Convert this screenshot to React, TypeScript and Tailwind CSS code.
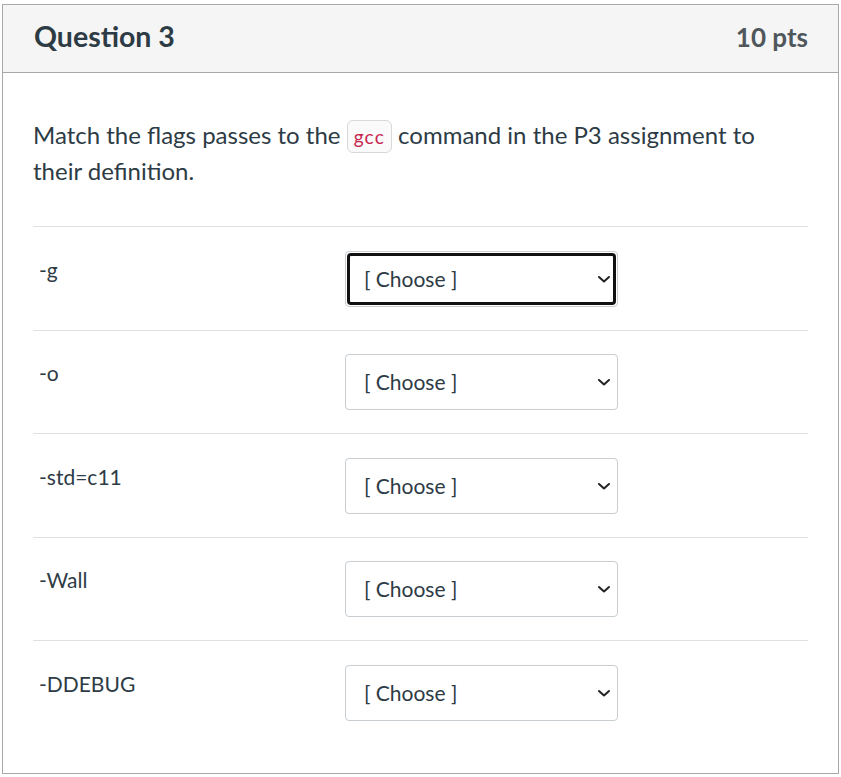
import React from "react";

const flags = ["-g", "-o", "-std=c11", "-Wall", "-DDEBUG"];

function Chevron() {
  return (
    <svg width="14" height="14" viewBox="0 0 14 14" fill="none" className="text-[#222]">
      <path d="M2 5l5 4.5L12 5" stroke="currentColor" strokeWidth="2" strokeLinecap="round" strokeLinejoin="round" />
    </svg>
  );
}

function ChooseBox({ focused }: { focused?: boolean }) {
  return (
    <div
      className={
        focused
          ? "flex h-[56px] w-[273px] items-center rounded-[4px] border border-[#c7cdd1] p-[1px]"
          : "flex h-[56px] w-[273px] items-center rounded-[4px] border border-[#c7cdd1]"
      }
    >
      {focused ? (
        <div className="flex h-full w-full items-center justify-between rounded-[4px] border-[3px] border-[#111] pl-[14px] pr-[2px]">
          <span className="text-[21px] text-[#2d3b45]">[ Choose ]</span>
          <Chevron />
        </div>
      ) : (
        <div className="flex h-full w-full items-center justify-between pl-[18px] pr-[6px]">
          <span className="text-[21px] text-[#2d3b45]">[ Choose ]</span>
          <Chevron />
        </div>
      )}
    </div>
  );
}

export default function App() {
  return (
    <div className="min-h-[777px] bg-white pt-[4px] pl-[2px] font-['Lato','Noto_Sans',sans-serif] text-[#2d3b45]">
      <div className="w-[837px] border border-[#a9a9a9]">
        <div className="flex h-[68px] items-center justify-between border-b border-[#a9a9a9] bg-[#f5f5f5] pb-[4px] pl-[31px] pr-[30px]">
          <h2 className="text-[28.5px] font-bold leading-none">Question 3</h2>
          <span className="text-[26px] font-bold leading-none text-[#4f575c]">10 pts</span>
        </div>
        <div className="px-[30px] pt-[44px] pb-[29px]">
          <p className="pr-[20px] text-[24px] leading-[36px]">
            Match the flags passes to the{" "}
            <code className="rounded-[6px] border border-[#d6d9db] bg-[#fafafa] px-[6px] py-[4px] font-['Lato',sans-serif] text-[19px] leading-none tracking-[1.2px] text-[#c7254e]">
              gcc
            </code>{" "}
            command in the P3 assignment to their definition.
          </p>
          <div className="mt-[37px]">
            {flags.map((f, i) => (
              <div key={f} className="flex border-t border-[#dde1e4] pt-[23.5px] pb-[23px]">
                <div className="w-[312px] pl-[6px] pt-[8px] text-[21px] leading-none">{f}</div>
                <ChooseBox focused={i === 0} />
              </div>
            ))}
          </div>
        </div>
      </div>
    </div>
  );
}
